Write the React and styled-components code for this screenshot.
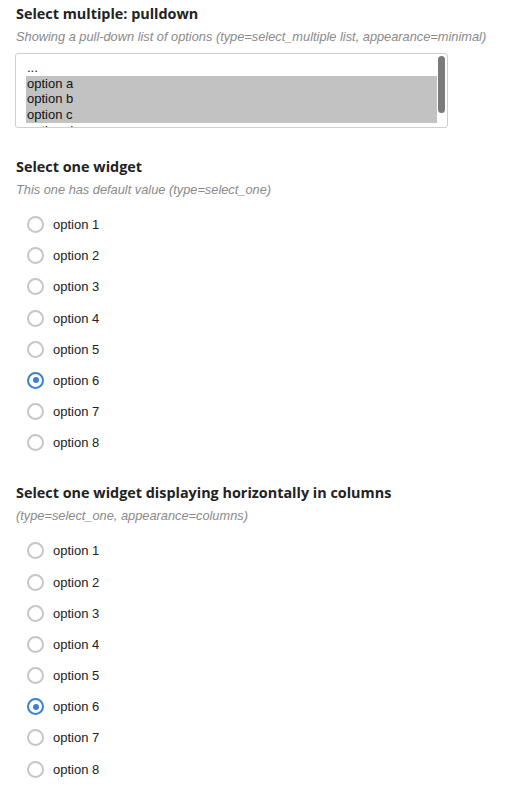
import React from "react";
import styled, { createGlobalStyle } from "styled-components";

const Global = createGlobalStyle`
  html, body { margin: 0; padding: 0; background: #fff; }
  body { font-family: "Liberation Sans", Arial, sans-serif; color: #333; }
`;

const Page = styled.div`
  padding: 4px 16px 20px 16px;
  display: flex;
  flex-direction: column;
`;

const Question = styled.section`
  display: flex;
  flex-direction: column;
  margin-bottom: ${(p) => p.$gap || 0}px;
`;

const Title = styled.h3`
  margin: 0;
  font-family: "Open Sans", sans-serif;
  font-weight: 700;
  font-size: 14.4px;
  line-height: 20px;
  color: #222;
`;

const Hint = styled.p`
  margin: 5px 0 0 0;
  font-family: "Liberation Sans", Arial, sans-serif;
  font-style: italic;
  font-size: 12.8px;
  line-height: 16px;
  color: #8a8a8a;
  white-space: nowrap;
`;

const ListBox = styled.div`
  margin: 8px 0 0 -1px;
  width: 433px;
  height: 75px;
  box-sizing: border-box;
  border: 1px solid #cfcfcf;
  border-radius: 3px;
  display: flex;
  overflow: hidden;
`;

const ListItems = styled.div`
  flex: 1;
  padding: 6px 0 0 10px;
  display: flex;
  flex-direction: column;
  overflow: hidden;
`;

const ListItem = styled.div`
  font-size: 13px;
  line-height: 15.7px;
  height: 15.7px;
  color: #111;
  padding-left: 1px;
  background: ${(p) => (p.$selected ? "#c2c2c2" : "transparent")};
  flex-shrink: 0;
`;

const Track = styled.div`
  width: 10px;
  padding: 2px 1px 0 1px;
  box-sizing: border-box;
`;

const Thumb = styled.div`
  width: 7px;
  height: 57px;
  border-radius: 4px;
  background: #7b7b7b;
`;

const Options = styled.div`
  margin-top: 15px;
  display: flex;
  flex-direction: column;
  gap: 8.2px;
`;

const Option = styled.label`
  display: flex;
  align-items: center;
  gap: 9px;
  padding-left: 11px;
  height: 23px;
  font-size: 13px;
  color: #222;
`;

const Radio = styled.span`
  width: 17px;
  height: 17px;
  box-sizing: border-box;
  border-radius: 50%;
  border: 2px solid ${(p) => (p.$checked ? "#3d7fd0" : "#c6c6c6")};
  display: flex;
  align-items: center;
  justify-content: center;
  background: #fff;
  &::after {
    content: "";
    width: 6px;
    height: 6px;
    border-radius: 50%;
    background: ${(p) => (p.$checked ? "#3d7fd0" : "transparent")};
  }
`;

const RadioGroup = ({ checked }) => (
  <Options>
    {[1, 2, 3, 4, 5, 6, 7, 8].map((n) => (
      <Option key={n}>
        <Radio $checked={n === checked} />
        option {n}
      </Option>
    ))}
  </Options>
);

export default function App() {
  return (
    <>
      <Global />
      <Page>
        <Question $gap={29}>
          <Title>Select multiple: pulldown</Title>
          <Hint>Showing a pull-down list of options (type=select_multiple list, appearance=minimal)</Hint>
          <ListBox>
            <ListItems>
              <ListItem>...</ListItem>
              <ListItem $selected>option a</ListItem>
              <ListItem $selected>option b</ListItem>
              <ListItem $selected>option c</ListItem>
              <ListItem>option d</ListItem>
            </ListItems>
            <Track>
              <Thumb />
            </Track>
          </ListBox>
        </Question>
        <Question $gap={29}>
          <Title>Select one widget</Title>
          <Hint>This one has default value (type=select_one)</Hint>
          <RadioGroup checked={6} />
        </Question>
        <Question>
          <Title>Select one widget displaying horizontally in columns</Title>
          <Hint>(type=select_one, appearance=columns)</Hint>
          <RadioGroup checked={6} />
        </Question>
      </Page>
    </>
  );
}
